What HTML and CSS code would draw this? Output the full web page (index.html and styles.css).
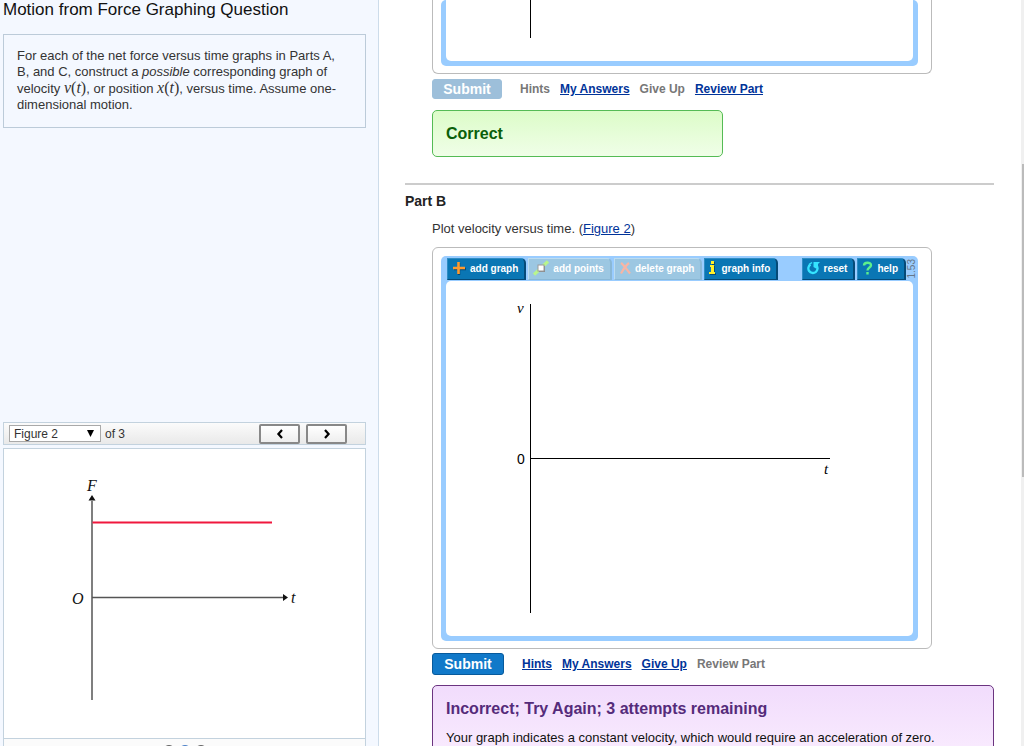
FILE: index.html
```html
<!DOCTYPE html>
<html lang="en">
<head>
  <meta charset="UTF-8">
  <meta name="viewport" content="width=device-width, initial-scale=1.0">
  <title>Motion from Force Graphing Question</title>
  <link rel="stylesheet" href="styles.css">
</head>
<body>
  <!-- Left column: problem intro and figure viewer -->
  <aside class="sidebar">
    <h1>Motion from Force Graphing Question</h1>
    <div class="intro">
      For each of the net force versus time graphs in Parts A, B, and C, construct a <em>possible</em> corresponding graph of velocity <span class="math"><i>v</i>(<i>t</i>)</span>, or position <span class="math"><i>x</i>(<i>t</i>)</span>, versus time. Assume one-dimensional motion.
    </div>

    <div class="figure-nav">
      <select id="figureSelect" aria-label="Figure">
        <option>Figure 1</option>
        <option selected>Figure 2</option>
        <option>Figure 3</option>
      </select>
      <label for="figureSelect">of 3</label>
      <div class="nav-buttons">
        <button type="button" aria-label="Previous figure">
          <svg width="8" height="10" viewBox="0 0 8 10"><path d="M6 1 L2.4 5 L6 9" fill="none" stroke="#000" stroke-width="2.2"/></svg>
        </button>
        <button type="button" aria-label="Next figure">
          <svg width="8" height="10" viewBox="0 0 8 10"><path d="M2 1 L5.6 5 L2 9" fill="none" stroke="#000" stroke-width="2.2"/></svg>
        </button>
      </div>
    </div>
    <div class="figure">
      <svg class="figure-graph" width="361" height="289" viewBox="0 0 361 289">
        <path d="M88 52 V251 M88 148.500 H281" stroke="#555" stroke-width="1.500" fill="none"/>
        <path d="M88 46 L91.500 51.500 H84.500 Z M284 148.500 L279 145 V152 Z" fill="#111"/>
        <path d="M88.500 73.500 H268" stroke="#f0173d" stroke-width="2"/>
        <text x="83" y="42">F</text>
        <text x="68" y="155">O</text>
        <text x="287" y="154">t</text>
      </svg>
    </div>
    <div class="figure-footer">
      <span class="dot"></span>
      <span class="dot active"></span>
      <span class="dot"></span>
    </div>
  </aside>

  <!-- Right column: question parts -->
  <main class="parts">
    <section class="part-body">
      <div class="applet applet-end">
        <div class="applet-frame">
          <div class="canvas">
            <svg width="467" height="61" viewBox="0 0 467 61"><path d="M84.500 0 V38" stroke="#000"/></svg>
          </div>
        </div>
      </div>
      <div class="actions">
        <button type="button" class="submit" disabled>Submit</button>
        <span>Hints</span>
        <a href="#">My Answers</a>
        <span>Give Up</span>
        <a href="#">Review Part</a>
      </div>
      <div class="feedback correct">
        <h3>Correct</h3>
      </div>
    </section>

    <hr>

    <h2>Part B</h2>
    <section class="part-body">
      <p class="prompt">Plot velocity versus time. (<a href="#">Figure 2</a>)</p>
      <div class="applet">
        <div class="applet-frame">
          <div class="toolbar">
            <button type="button">
              <svg width="14" height="14" viewBox="0 0 14 14"><path d="M7 2 V14 M2 8 H14" stroke="#054a78" stroke-width="2.500"/><path d="M6.500 1 V13 M1 7 H13" stroke="#ff9a2e" stroke-width="2.600"/></svg>
              add graph
            </button>
            <button type="button" disabled>
              <svg width="16" height="16" viewBox="0 0 16 16"><path d="M1 14.500 L6 10 M10 6 L15 1.500" stroke="#b9f58c" stroke-width="3.200"/><rect x="6" y="6" width="6" height="6" fill="#888"/><rect x="5" y="5" width="6" height="6" fill="#fff" stroke="#999"/></svg>
              add points
            </button>
            <button type="button" disabled>
              <svg width="12" height="14" viewBox="0 0 12 14"><path d="M2 2 C5 4 8 9 11 12.500 M10 2 C6 5 4 9 2 12.500" stroke="#f8b5a4" stroke-width="2.200" fill="none"/></svg>
              delete graph
            </button>
            <button type="button">
              <svg width="8" height="16" viewBox="0 0 8 16"><path d="M3 2 H6 V5 H3 Z M2 6 H6 V13 H7 V15 H1 V13 H3 V8 H2 Z" fill="#054a78"/><path d="M2 1 H5 V4 H2 Z M1 5 H5 V12 H6 V14 H0 V12 H2 V7 H1 Z" fill="#fff02a"/></svg>
              graph info
            </button>
            <button type="button" class="reset">
              <svg width="13" height="14" viewBox="0 0 13 14"><path d="M3.500 3.500 A4.600 4.600 0 1 0 9.500 4.500" fill="none" stroke="#35e4ff" stroke-width="2.300"/><path d="M6.500 1 H13 L11 3 V7.500 H9 L6.500 6 Z" fill="#35e4ff"/><path d="M2 3.500 L5 1.500" stroke="#35e4ff" stroke-width="1.500"/></svg>
              reset
            </button>
            <button type="button">
              <svg width="11" height="14" viewBox="0 0 11 14"><path d="M2 4.500 C2 0.800 9 0.800 9 4.200 C9 6.500 5.500 6.500 5.500 9.500 M5.500 11 V13.500" fill="none" stroke="#5cf08c" stroke-width="2.400"/></svg>
              help
            </button>
            <span class="version">1.53</span>
          </div>
          <div class="canvas">
            <svg width="467" height="355" viewBox="0 0 467 355">
              <path d="M84.500 23 V332 M84.500 177.500 H384" stroke="#000" fill="none"/>
              <text class="axis" x="71" y="32">v</text>
              <text class="origin" x="71" y="183">0</text>
              <text class="axis" x="378" y="193">t</text>
            </svg>
          </div>
        </div>
      </div>
      <div class="actions">
        <button type="button" class="submit">Submit</button>
        <a href="#">Hints</a>
        <a href="#">My Answers</a>
        <a href="#">Give Up</a>
        <span>Review Part</span>
      </div>
      <div class="feedback incorrect">
        <h3>Incorrect; Try Again; 3 attempts remaining</h3>
        <p>Your graph indicates a constant velocity, which would require an acceleration of zero.</p>
      </div>
    </section>
  </main>

  <div class="scroll-track"><div class="scroll-thumb"></div></div>
</body>
</html>
```
FILE: styles.css
```css
* {
  box-sizing: border-box;
}

body {
  margin: 0;
  display: flex;
  height: 100vh;
  overflow: hidden;
  font-family: "Liberation Sans", Arial, sans-serif;
  font-size: 13px;
  line-height: 16px;
  color: #333;
  background-color: #fff;
}

svg {
  display: block;
  flex: none;
}

h1, h2, h3, p {
  margin: 0;
}

a {
  color: #003399;
}

/* Left column */
.sidebar {
  flex: 0 0 37%;
  display: flex;
  flex-direction: column;
  padding: 0 12px 0 3px;
  background-color: #f4f8ff;
  border-right: 1px solid #cddcea;
}

h1 {
  font-size: 17px;
  font-weight: normal;
  line-height: 20px;
  color: #111;
}

.intro {
  margin-top: 14px;
  padding: 13px 16px 14px 13px;
  border: 1px solid #bccbd9;
}

.math {
  font-family: "Liberation Serif", serif;
  font-size: 16px;
  line-height: 16px;
}

/* Figure viewer */
.figure-nav {
  display: flex;
  align-items: center;
  gap: 4px;
  margin-top: auto;
  height: 23px;
  padding: 0 18px 0 5px;
  font-size: 12px;
  border: 1px solid #c3d2de;
  background: linear-gradient(#fbfbfb, #e9e9e9);
}

.figure-nav select {
  appearance: none;
  width: 92px;
  height: 17px;
  padding: 0 4px;
  border: 1px solid #a9a9a9;
  border-radius: 0;
  font-family: inherit;
  font-size: 12px;
  color: #333;
  background: #fff url("data:image/svg+xml,%3Csvg xmlns='http://www.w3.org/2000/svg' width='7' height='7'%3E%3Cpath d='M0 0H7L3.5 7Z'/%3E%3C/svg%3E") no-repeat right 6px center;
}

.nav-buttons {
  display: flex;
  gap: 6px;
  margin-left: auto;
}

.nav-buttons button {
  display: flex;
  align-items: center;
  justify-content: center;
  width: 41px;
  height: 20px;
  padding: 0;
  border: 2px solid #888;
  border-radius: 2px;
  background: linear-gradient(#fff, #eee);
}

.figure {
  margin-top: 3px;
  border: 1px solid #c3d2de;
  background-color: #fff;
}

.figure-graph text {
  font-family: "Liberation Serif", serif;
  font-style: italic;
  font-size: 16px;
  fill: #111;
}

.figure-footer {
  display: flex;
  justify-content: center;
  gap: 4px;
  height: 7px;
  padding-top: 6px;
  overflow: hidden;
  border: 1px solid #c3d2de;
  border-width: 0 1px;
  background-color: #fbfbfb;
}

.dot {
  width: 12px;
  height: 12px;
  border-radius: 50%;
  background-color: #666;
}

.dot.active {
  background-color: #4a7fc8;
}

/* Right column */
.parts {
  flex: 1;
  min-width: 0;
  padding: 0 27px 0 26px;
}

.part-body {
  padding-left: 27px;
}

hr {
  height: 2px;
  margin: 26px 0 8px;
  border: none;
  background-color: #ccc;
}

h2 {
  font-size: 14px;
  line-height: 16px;
  color: #222;
}

.prompt {
  margin: 12px 0 10px;
}

/* Graphing applet */
.applet {
  width: 500px;
  max-width: 100%;
  padding: 8px 13px 7px 8px;
  border: 1px solid #bbb;
  border-radius: 6px;
}

.applet-frame {
  padding: 0 5px 5px;
  border-radius: 5px;
  background-color: #99ccff;
}

.applet-end {
  padding-top: 0;
  border-top: none;
  border-radius: 0 0 6px 6px;
}

.canvas {
  overflow: hidden;
  border-radius: 5px;
  background-color: #fff;
}

.applet-end .canvas {
  border-radius: 0 0 5px 5px;
}

.toolbar {
  display: flex;
  gap: 2px;
  height: 25px;
  margin-right: -3px;
  padding: 2px 0 1px 1px;
}

.toolbar button {
  display: flex;
  align-items: center;
  gap: 4px;
  padding: 0 6px 2px 4px;
  border: 1px solid #2f8dc4;
  border-right: 2px solid #054a78;
  border-bottom-color: #054a78;
  border-radius: 0 5px 0 0;
  background-color: #0a76b4;
  font-family: "Liberation Sans", Arial, sans-serif;
  font-size: 10px;
  font-weight: bold;
  color: #fff;
  white-space: nowrap;
}

.toolbar button:disabled {
  border-color: #bcdcf0 #8ab8d6 #8ab8d6 #bcdcf0;
  background-color: #9cc7e2;
}

.toolbar .reset {
  margin-left: auto;
}

.version {
  align-self: center;
  width: 8px;
  writing-mode: vertical-rl;
  transform: rotate(180deg);
  font-size: 10px;
  line-height: 8px;
  color: #667788;
}

.axis {
  font-family: "Liberation Serif", serif;
  font-style: italic;
  font-size: 15px;
}

.origin {
  font-size: 14px;
}

/* Submit row */
.actions {
  display: flex;
  align-items: center;
  gap: 10px;
  height: 22px;
  margin-top: 4px;
  font-size: 12px;
  font-weight: bold;
  color: #777;
}

.submit {
  width: 72px;
  height: 22px;
  margin-right: 8px;
  padding: 0;
  border: 1px solid #075a9c;
  border-radius: 3px;
  background-color: #1179c9;
  font-family: inherit;
  font-size: 14px;
  font-weight: bold;
  color: #fff;
}

.submit:disabled {
  width: 70px;
  height: 20px;
  border-color: #9dbfda;
  background-color: #9dbfda;
}

/* Feedback boxes */
.feedback {
  margin-top: 10px;
  padding: 13px;
  border: 1px solid;
  border-radius: 5px;
}

.feedback h3 {
  font-size: 16px;
  line-height: 19px;
}

.feedback p {
  margin-top: 12px;
  color: #111;
}

.correct {
  width: 291px;
  border-color: #55bb55;
  background: linear-gradient(#dcfcc8, #f0fee8);
}

.correct h3 {
  color: #0a5f0a;
}

.incorrect {
  height: 140px;
  border-color: #6b3480;
  background: linear-gradient(#f1dcfc, #fdf2ff 100px);
}

.incorrect h3 {
  color: #552b7a;
}

/* Page scrollbar edge */
.scroll-track {
  flex: 0 0 3px;
  background-color: #f0f0f0;
}

.scroll-thumb {
  height: 42%;
  margin: 164px 0 0 1px;
  background-color: #bbb;
}
```
